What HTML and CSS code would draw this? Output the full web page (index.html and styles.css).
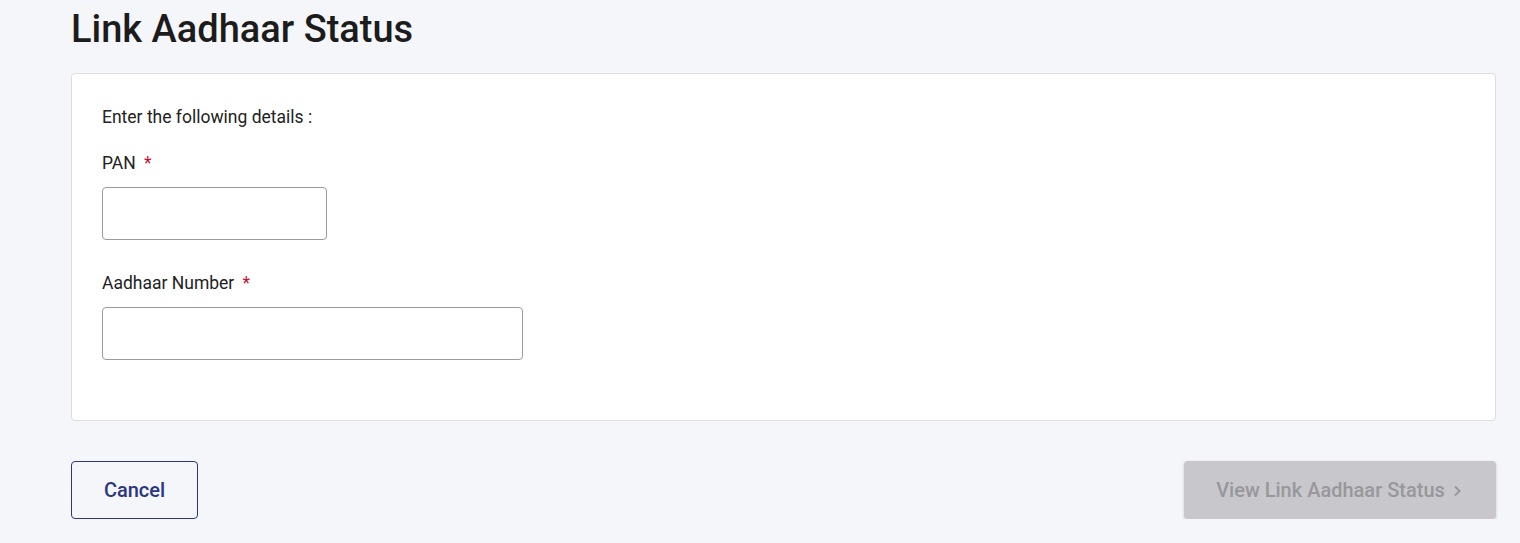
FILE: index.html
```html
<!DOCTYPE html>
<html>
<head>
<meta charset="utf-8">
<link rel="stylesheet" href="styles.css">
</head>
<body>
<main class="page">
  <h1 class="title">Link Aadhaar Status</h1>
  <section class="card">
    <p class="intro">Enter the following details :</p>
    <div class="field">
      <label class="label">PAN <span class="req">*</span></label>
      <input class="input input-pan" type="text">
    </div>
    <div class="field">
      <label class="label">Aadhaar Number <span class="req">*</span></label>
      <input class="input input-aadhaar" type="text">
    </div>
  </section>
  <div class="actions">
    <button class="btn btn-cancel">Cancel</button>
    <button class="btn btn-submit">View Link Aadhaar Status
      <svg class="chev" width="12" height="16" viewBox="0 0 12 16"><path d="M3 3.5 L7.5 8 L3 12.5" fill="none" stroke="currentColor" stroke-width="2"/></svg>
    </button>
  </div>
</main>
</body>
</html>
```
FILE: styles.css
```css
* { box-sizing: border-box; }
html, body { margin: 0; padding: 0; }
body {
  background: #f5f6fa;
  font-family: Roboto, "Liberation Sans", sans-serif;
  color: #222;
}
.page {
  padding: 0 24px 0 71px;
}
.title {
  margin: 0;
  padding-top: 7px;
  height: 73px;
  font-size: 38px;
  font-weight: 500;
  color: #1c1c1c;
  line-height: 44px;
}
.card {
  background: #fff;
  border: 1px solid #dcdde3;
  border-radius: 4px;
  padding: 30px 30px 0 30px;
  height: 348px;
}
.intro {
  margin: 0;
  font-size: 17.5px;
  line-height: 26px;
  color: #222;
}
.field {
  display: flex;
  flex-direction: column;
  align-items: flex-start;
}
.field:first-of-type { margin-top: 20px; }
.field + .field { margin-top: 30px; }
.label {
  font-size: 17.5px;
  line-height: 26px;
  color: #222;
  margin-bottom: 11px;
}
.req { color: #c8102e; margin-left: 4px; }
.input {
  height: 53px;
  border: 1px solid #9b9b9b;
  border-radius: 4px;
  background: #fff;
  font-size: 16px;
}
.input-pan { width: 225px; }
.input-aadhaar { width: 421px; }
.actions {
  display: flex;
  justify-content: space-between;
  margin-top: 40px;
}
.btn {
  height: 58px;
  border-radius: 4px;
  font-family: Roboto, "Liberation Sans", sans-serif;
  font-size: 20px;
  font-weight: 500;
  display: flex;
  align-items: center;
  justify-content: center;
}
.btn-cancel {
  width: 127px;
  background: transparent;
  border: 1px solid #2b3582;
  color: #2b3582;
}
.btn-submit {
  width: 312px;
  background: #c8c7cc;
  border: none;
  color: #98979c;
  box-shadow: 0 1px 3px rgba(0,0,0,0.18);
  gap: 7px;
}
.chev { margin-top: 2px; }
```
